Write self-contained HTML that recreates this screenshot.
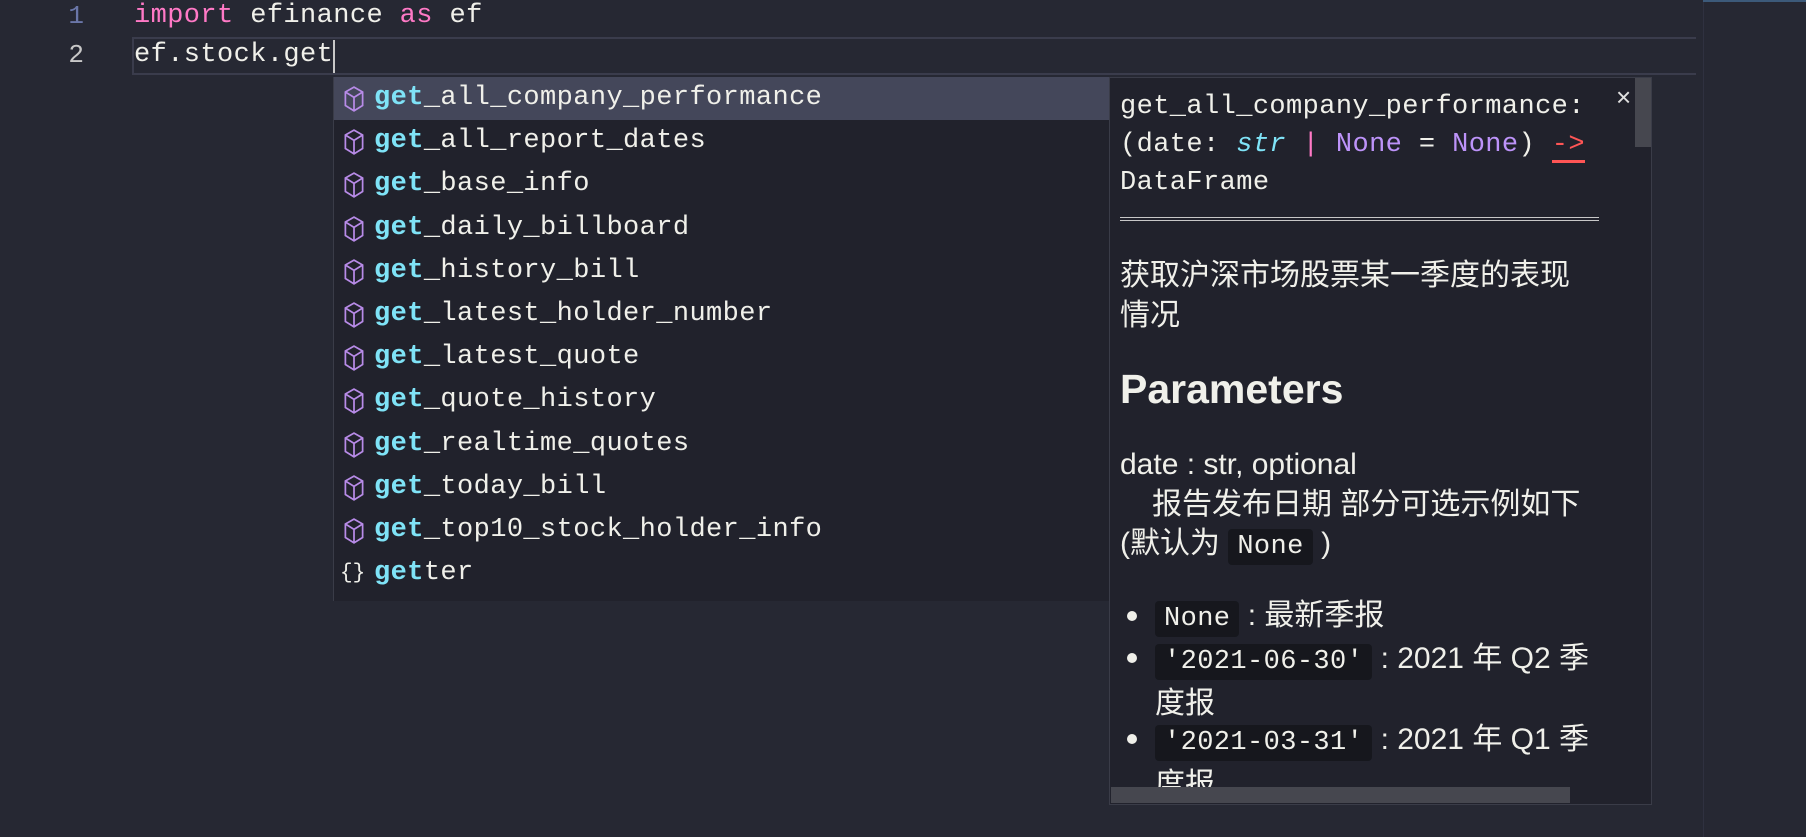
<!DOCTYPE html>
<html><head><meta charset="utf-8"><style>
*{margin:0;padding:0;box-sizing:border-box}
body{width:1806px;height:837px;background:#262833;overflow:hidden;position:relative;font-family:"Liberation Mono","Noto Sans CJK SC",monospace;color:#f0f0ea}
.abs{position:absolute;white-space:nowrap}
.code{font-size:27px;letter-spacing:0.4px;line-height:39px}
.ln{color:#6a76a8;font-size:26px;line-height:39px;text-align:right;width:40px;left:44px}
.kw{color:#ff79c6}
.row{position:absolute;left:0;width:775px;height:43.2px;line-height:43.2px;font-size:27px;letter-spacing:0.4px;padding-left:40px;color:#f0f0ea}
.row b{color:#7fe3f7}
.row svg{position:absolute;left:8px;top:8px}
.d{font-size:27px;letter-spacing:0.4px;line-height:38px;left:10px;position:absolute;white-space:nowrap}
.cj{font-family:"Liberation Sans","Noto Sans CJK SC",sans-serif;font-size:30px;letter-spacing:0;position:absolute;white-space:nowrap}
.cc{font-family:"Liberation Mono",monospace;font-size:27px;background:#16171d;border-radius:4px;padding:3px 9px;letter-spacing:0.4px}
</style></head><body>
<div class="abs" style="left:1703px;top:0;width:103px;height:837px;background:#262833;border-left:1px solid #2f3140"></div>
<div class="abs" style="left:1703px;top:0;width:103px;height:2px;background:#3c5a7a"></div>
<div class="abs ln" style="top:-3px">1</div>
<div class="abs ln" style="top:36px;color:#c8c8c8">2</div>
<div class="abs" style="left:132px;top:37px;width:1564px;height:38px;border:2px solid #3a3c4c;border-right:none"></div>
<div class="abs code" style="left:134px;top:-3px"><span class="kw">import</span> efinance <span class="kw">as</span> ef</div>
<div class="abs code" style="left:134px;top:36px">ef.stock.get</div>
<div class="abs" style="left:333px;top:40px;width:2px;height:33px;background:#c8c8c8"></div>

<div class="abs" style="left:333px;top:77px;width:776px;height:524px;background:#21222c;border-left:1px solid #3a3c48">
<div class="row" style="top:0;background:#44475a"><svg width="24" height="28" viewBox="0 0 22 26"><path d="M11 2L19 6.5V19L11 24L3 19V6.5Z M3 6.5L11 11.5L19 6.5 M11 11.5V24" fill="none" stroke="#b88be8" stroke-width="1.6"/></svg><b>get</b>_all_company_performance</div>
<div class="row" style="top:43.2px"><svg width="24" height="28" viewBox="0 0 22 26"><path d="M11 2L19 6.5V19L11 24L3 19V6.5Z M3 6.5L11 11.5L19 6.5 M11 11.5V24" fill="none" stroke="#b88be8" stroke-width="1.6"/></svg><b>get</b>_all_report_dates</div>
<div class="row" style="top:86.4px"><svg width="24" height="28" viewBox="0 0 22 26"><path d="M11 2L19 6.5V19L11 24L3 19V6.5Z M3 6.5L11 11.5L19 6.5 M11 11.5V24" fill="none" stroke="#b88be8" stroke-width="1.6"/></svg><b>get</b>_base_info</div>
<div class="row" style="top:129.6px"><svg width="24" height="28" viewBox="0 0 22 26"><path d="M11 2L19 6.5V19L11 24L3 19V6.5Z M3 6.5L11 11.5L19 6.5 M11 11.5V24" fill="none" stroke="#b88be8" stroke-width="1.6"/></svg><b>get</b>_daily_billboard</div>
<div class="row" style="top:172.8px"><svg width="24" height="28" viewBox="0 0 22 26"><path d="M11 2L19 6.5V19L11 24L3 19V6.5Z M3 6.5L11 11.5L19 6.5 M11 11.5V24" fill="none" stroke="#b88be8" stroke-width="1.6"/></svg><b>get</b>_history_bill</div>
<div class="row" style="top:216px"><svg width="24" height="28" viewBox="0 0 22 26"><path d="M11 2L19 6.5V19L11 24L3 19V6.5Z M3 6.5L11 11.5L19 6.5 M11 11.5V24" fill="none" stroke="#b88be8" stroke-width="1.6"/></svg><b>get</b>_latest_holder_number</div>
<div class="row" style="top:259.2px"><svg width="24" height="28" viewBox="0 0 22 26"><path d="M11 2L19 6.5V19L11 24L3 19V6.5Z M3 6.5L11 11.5L19 6.5 M11 11.5V24" fill="none" stroke="#b88be8" stroke-width="1.6"/></svg><b>get</b>_latest_quote</div>
<div class="row" style="top:302.4px"><svg width="24" height="28" viewBox="0 0 22 26"><path d="M11 2L19 6.5V19L11 24L3 19V6.5Z M3 6.5L11 11.5L19 6.5 M11 11.5V24" fill="none" stroke="#b88be8" stroke-width="1.6"/></svg><b>get</b>_quote_history</div>
<div class="row" style="top:345.6px"><svg width="24" height="28" viewBox="0 0 22 26"><path d="M11 2L19 6.5V19L11 24L3 19V6.5Z M3 6.5L11 11.5L19 6.5 M11 11.5V24" fill="none" stroke="#b88be8" stroke-width="1.6"/></svg><b>get</b>_realtime_quotes</div>
<div class="row" style="top:388.8px"><svg width="24" height="28" viewBox="0 0 22 26"><path d="M11 2L19 6.5V19L11 24L3 19V6.5Z M3 6.5L11 11.5L19 6.5 M11 11.5V24" fill="none" stroke="#b88be8" stroke-width="1.6"/></svg><b>get</b>_today_bill</div>
<div class="row" style="top:432px"><svg width="24" height="28" viewBox="0 0 22 26"><path d="M11 2L19 6.5V19L11 24L3 19V6.5Z M3 6.5L11 11.5L19 6.5 M11 11.5V24" fill="none" stroke="#b88be8" stroke-width="1.6"/></svg><b>get</b>_top10_stock_holder_info</div>
<div class="row" style="top:475.2px"><span style="position:absolute;left:6px;font-size:21px;letter-spacing:0">{}</span><b>get</b>ter</div>
</div>

<div class="abs" style="left:1109px;top:77px;width:543px;height:728px;background:#21222c;border:1px solid #3a3c48;overflow:hidden">
<div class="d" style="top:10px">get_all_company_performance:</div>
<div class="d" style="top:48px">(date: <i style="color:#7fe3f7">str</i> <span style="color:#ff79c6">|</span> <span style="color:#bd93f9">None</span> = <span style="color:#bd93f9">None</span>) <span style="color:#ff5555;border-bottom:3px solid #ff5555">-&gt;</span></div>
<div class="d" style="top:86px">DataFrame</div>
<div class="abs" style="left:10px;top:139px;width:479px;height:4px;border-top:1px solid #c8c8c8;border-bottom:1px solid #c8c8c8"></div>
<div class="cj" style="left:10px;top:178px;line-height:40px">获取沪深市场股票某一季度的表现<br>情况</div>
<div class="abs" style="left:10px;top:286px;font-family:'Liberation Sans',sans-serif;font-weight:bold;font-size:41px;line-height:50px">Parameters</div>
<div class="cj" style="left:10px;top:367px;line-height:40px">date : str, optional</div>
<div class="cj" style="left:42px;top:407px;line-height:40px">报告发布日期 部分可选示例如下</div>
<div class="cj" style="left:10px;top:446px;line-height:40px">(默认为 <span class="cc">None</span> )</div>
<div class="abs" style="left:17px;top:533px;width:10px;height:10px;border-radius:50%;background:#f0f0ea"></div>
<div class="abs" style="left:17px;top:575px;width:10px;height:10px;border-radius:50%;background:#f0f0ea"></div>
<div class="abs" style="left:17px;top:656px;width:10px;height:10px;border-radius:50%;background:#f0f0ea"></div>
<div class="cj" style="left:45px;top:518px;line-height:40px"><span class="cc">None</span> : 最新季报</div>
<div class="cj" style="left:45px;top:560px;line-height:41px"><span class="cc">'2021-06-30'</span> : 2021 年 Q2 季<br>度报</div>
<div class="cj" style="left:45px;top:641px;line-height:41px"><span class="cc">'2021-03-31'</span> : 2021 年 Q1 季<br>度报</div>
<div class="abs" style="left:1px;top:709px;width:459px;height:16px;background:#46474f"></div>
<div class="abs" style="left:525px;top:0;width:17px;height:69px;background:#46474f"></div>
<div class="abs" style="left:506px;top:4px;font-family:'Liberation Sans',sans-serif;font-size:26px;color:#e0e0e0">×</div>
</div>
</body></html>
